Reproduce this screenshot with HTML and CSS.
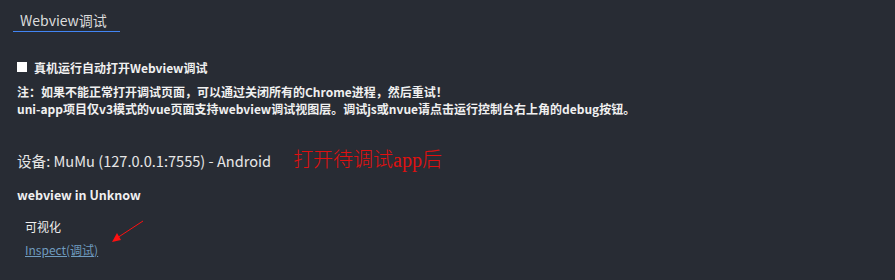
FILE: index.html
```html
<!DOCTYPE html>
<html lang="zh-CN">
<head>
<meta charset="utf-8">
<link rel="stylesheet" href="styles.css">
</head>
<body>
<div class="page">
  <div class="tabs">
    <div class="tab">Webview调试</div>
  </div>
  <div class="content">
    <div class="option">
      <span class="checkbox"></span>
      <span class="option-label">真机运行自动打开Webview调试</span>
    </div>
    <div class="note">
      <p>注：如果不能正常打开调试页面，可以通过关闭所有的Chrome进程，然后重试！</p>
      <p>uni-app项目仅v3模式的vue页面支持webview调试视图层。调试js或nvue请点击运行控制台右上角的debug按钮。</p>
    </div>
    <div class="device-row">
      <span class="device">设备: MuMu (127.0.0.1:7555) - Android</span>
      <span class="annotation">打开待调试app后</span>
    </div>
    <div class="webview-title">webview in Unknow</div>
    <div class="webview-item">
      <div class="item-name">可视化</div>
      <a class="inspect" href="#">Inspect(调试)</a>
      <svg class="arrow" width="40" height="30" viewBox="0 0 40 30">
        <line x1="37" y1="1" x2="11" y2="18" stroke="#ff1010" stroke-width="1"/>
        <polygon points="6,22 11,13 15,20" fill="#ff1010"/>
      </svg>
    </div>
  </div>
</div>
</body>
</html>
```
FILE: styles.css
```css
html, body {
  margin: 0;
  padding: 0;
  background: #282c34;
}
.page {
  width: 895px;
  height: 280px;
  background: #282c34;
  color: #e8e8e8;
  font-family: "Noto Sans CJK SC", "Noto Sans", sans-serif;
  overflow: hidden;
}
.tabs {
  padding-left: 13px;
  padding-top: 9px;
}
.tab {
  width: 100px;
  padding-left: 7px;
  height: 22px;
  line-height: 22px;
  font-size: 14px;
  color: #dcdcdc;
  border-bottom: 1px solid #4285f4;
}
.content {
  padding-left: 17px;
}
.option {
  display: flex;
  align-items: center;
  margin-top: 29px;
  height: 12px;
}
.checkbox {
  width: 10px;
  height: 10px;
  background: #ffffff;
  margin-right: 7px;
}
.option-label {
  font-size: 12px;
  font-weight: bold;
  color: #f0f0f0;
}
.note {
  margin-top: 10px;
}
.note p {
  margin: 0;
  font-size: 12px;
  font-weight: bold;
  line-height: 17px;
  color: #f0f0f0;
}
.device-row {
  display: flex;
  align-items: center;
  margin-top: 32px;
  height: 22px;
}
.device {
  font-size: 14.6px;
  color: #e6e6e6;
}
.annotation {
  margin-left: 22px;
  margin-top: -4px;
  font-family: "Liberation Serif", "Noto Sans CJK SC", serif;
  font-size: 20px;
  font-weight: 300;
  color: #e01010;
}
.webview-title {
  margin-top: 15px;
  font-size: 12.5px;
  font-weight: bold;
  color: #f0f0f0;
  line-height: 17px;
}
.webview-item {
  position: relative;
  padding-left: 8px;
  margin-top: 15px;
}
.item-name {
  font-size: 12px;
  line-height: 17px;
  color: #eeeeee;
}
.inspect {
  display: inline-block;
  margin-top: 6px;
  font-size: 12px;
  line-height: 17px;
  color: #6f9bbf;
  text-decoration: underline;
}
.arrow {
  position: absolute;
  left: 89px;
  top: 2px;
}
```
